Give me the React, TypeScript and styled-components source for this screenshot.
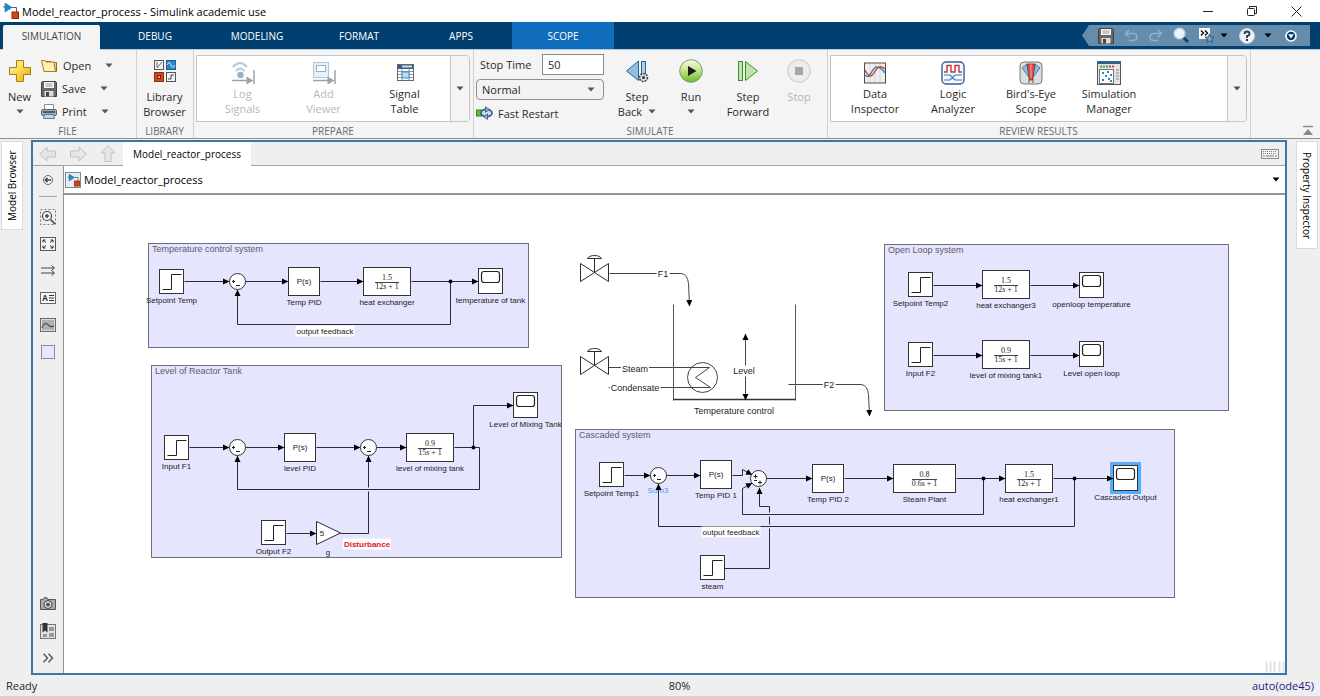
import React from "react";
import styled, { createGlobalStyle } from "styled-components";

const GlobalStyle = createGlobalStyle`
  * { box-sizing: border-box; }
  body { margin: 0; background: #efefef; }
  body, button, input, select {
    font-family: "Open Sans", "Noto Sans", sans-serif;
    font-size: 11px;
    color: #1f1f1f;
  }
  button, input, select { margin: 0; padding: 0; border: 0; background: none; }
  svg { display: block; flex: none; }
`;

/* ---------- frame ---------- */

const Page = styled.div`
  display: flex;
  flex-direction: column;
  min-height: 100vh;
`;

const TitleBar = styled.header`
  display: flex;
  align-items: center;
  height: 22px;
  padding-left: 3px;
  gap: 3px;
  background: #fff;
  color: #000;
`;

const WindowTitle = styled.h1`
  flex: 1;
  margin: 0;
  font-size: 11px;
  font-weight: 400;
`;

const WindowButton = styled.button`
  display: flex;
  align-items: center;
  justify-content: center;
  width: 44px;
  height: 22px;
`;

const WindowButtons = styled.div`
  display: flex;
  padding-right: 2px;
`;

const TabStrip = styled.nav`
  display: flex;
  justify-content: space-between;
  height: 28px;
  padding-left: 2px;
  background: #003f6f;
  border-bottom: 1px solid #b9c9d8;
`;

const TabList = styled.div`
  display: flex;
`;

const Tab = styled.button<{ $kind?: "active" | "context" }>`
  width: ${(p) => (p.$kind === "active" ? 97 : 102)}px;
  margin: ${(p) => (p.$kind === "active" ? "3px 4px 0 1px" : "0")};
  height: ${(p) => (p.$kind === "active" ? 25 : 27)}px;
  padding-bottom: ${(p) => (p.$kind === "active" ? 3 : 0)}px;
  border-radius: ${(p) => (p.$kind === "active" ? "2px 2px 0 0" : "0")};
  background: ${(p) =>
    p.$kind === "active" ? "#f4f4f4" : p.$kind === "context" ? "#106dbb" : "transparent"};
  color: ${(p) => (p.$kind === "active" ? "#454545" : "#fff")};
  font-size: 10px;
`;

const QuickBar = styled.div`
  display: flex;
  align-items: center;
  width: 228px;
  height: 21px;
  margin: 3px 10px 0 0;
  padding-left: 14px;
  background: #668cab;
  clip-path: polygon(0 50%, 7px 0, 100% 0, 100% 100%, 7px 100%);
`;

const QuickButton = styled.button<{ $w?: number }>`
  display: flex;
  align-items: center;
  justify-content: center;
  width: ${(p) => p.$w ?? 25}px;
  height: 21px;
`;

/* ---------- ribbon ---------- */

const Ribbon = styled.div`
  display: flex;
  height: 89px;
  background: #f4f4f4;
  border-bottom: 1px solid #8b9096;
`;

const Group = styled.section<{ $w: number }>`
  display: flex;
  flex-direction: column;
  width: ${(p) => p.$w}px;
  height: 88px;
  padding: 5px 3px 0 2px;
  border-right: 1px solid #cfcfcf;
`;

const GroupBody = styled.div`
  display: flex;
  height: 69px;
`;

const GroupTitle = styled.h2`
  margin: 0;
  font-size: 10px;
  line-height: 14px;
  font-weight: 400;
  text-align: center;
  color: #6a6a6a;
`;

const BigButton = styled.button<{ $w: number; $off?: boolean }>`
  display: flex;
  flex-direction: column;
  align-items: center;
  width: ${(p) => p.$w}px;
  padding-top: 4px;
  line-height: 15px;
  color: ${(p) => (p.$off ? "#b5b5b5" : "#2b2b2b")};
  svg { margin-bottom: 6px; }
`;

const Line = styled.span`
  display: flex;
  align-items: center;
  justify-content: center;
  gap: 6px;
  height: 15px;
  white-space: nowrap;
  svg { margin: 0; }
`;

const SmallList = styled.div`
  display: flex;
  flex-direction: column;
  margin-top: -1px;
  padding-left: 4px;
`;

const SmallButton = styled.button<{ $gap?: number }>`
  display: flex;
  align-items: center;
  gap: 5px;
  height: 23px;
  color: #2b2b2b;
  svg:last-child { margin-left: ${(p) => p.$gap ?? 0}px; }
`;

const Gallery = styled.div`
  display: flex;
  flex: 1;
  height: 67px;
  margin-bottom: 2px;
  background: #fff;
  border: 1px solid #c4c4c4;
  border-radius: 0 4px 4px 0;
`;

const GalleryItems = styled.div`
  display: flex;
  flex: 1;
  padding-left: 5px;
`;

const GalleryItem = styled.button<{ $w: number; $off?: boolean }>`
  display: flex;
  flex-direction: column;
  align-items: center;
  width: ${(p) => p.$w}px;
  padding-top: 5px;
  line-height: 15px;
  color: ${(p) => (p.$off ? "#b8b8b8" : "#2b2b2b")};
  svg { margin-bottom: 1px; }
`;

const GalleryMore = styled.button`
  display: flex;
  align-items: center;
  justify-content: center;
  width: 19px;
  background: #f4f4f4;
  border-left: 1px solid #c4c4c4;
  border-radius: 0 4px 4px 0;
`;

const SimSettings = styled.div`
  display: flex;
  flex-direction: column;
  width: 128px;
  margin-top: -1px;
`;

const StopRow = styled.label`
  display: flex;
  align-items: center;
  justify-content: space-between;
  padding-left: 4px;
  color: #2b2b2b;
`;

const StopInput = styled.input`
  width: 62px;
  height: 21px;
  padding-left: 5px;
  background: #fff;
  border: 1px solid #8a8a8a;
`;

const SelectWrap = styled.div`
  position: relative;
  margin: 4px 0 2px;
  svg { position: absolute; right: 9px; top: 8px; pointer-events: none; }
`;

const ModeSelect = styled.select`
  appearance: none;
  display: block;
  width: 100%;
  height: 21px;
  padding-left: 5px;
  background: #f2f2f2;
  border: 1px solid #8f8f8f;
  border-radius: 4px;
`;

const RibbonEnd = styled.div`
  display: flex;
  flex: 1;
  align-items: flex-end;
  justify-content: flex-end;
  padding: 0 6px 2px 0;
`;

/* ---------- workspace ---------- */

const Workspace = styled.div`
  display: flex;
  flex: 1;
`;

const SideRail = styled.aside<{ $right?: boolean }>`
  display: flex;
  align-items: flex-start;
  justify-content: ${(p) => (p.$right ? "flex-end" : "flex-start")};
  width: ${(p) => (p.$right ? 33 : 31)}px;
  padding: 2px 2px 0 1px;
`;

const SideTab = styled.button<{ $h: number; $up?: boolean }>`
  width: 22px;
  height: ${(p) => p.$h}px;
  background: #fff;
  border: 1px solid #dadada;
  color: #000;
  font-size: 10px;
  line-height: 20px;
  writing-mode: vertical-rl;
  transform: ${(p) => (p.$up ? "rotate(180deg)" : "none")};
`;

const Editor = styled.main`
  display: flex;
  flex: 1;
  flex-direction: column;
  min-width: 0;
  margin-top: 1px;
  border: 2px solid #3a76ab;
  background: #efefef;
`;

const NavRow = styled.div`
  display: flex;
  align-items: stretch;
  height: 24px;
  padding-right: 6px;
  border-bottom: 1px solid #a0a4a8;
`;

const NavButton = styled.button`
  display: flex;
  align-items: center;
  justify-content: center;
  width: 30px;
`;

const DocTab = styled.button`
  width: 128px;
  height: 24px;
  background: #fff;
  color: #000;
  font-size: 10px;
`;

const NavEnd = styled.div`
  display: flex;
  flex: 1;
  align-items: center;
  justify-content: flex-end;
`;

const EditorBody = styled.div`
  display: flex;
  flex: 1;
`;

const Palette = styled.div`
  display: flex;
  flex-direction: column;
  justify-content: space-between;
  width: 31px;
  padding-bottom: 2px;
  border-right: 1px solid #8f959b;
`;

const PaletteGroup = styled.div`
  display: flex;
  flex-direction: column;
  align-items: center;
`;

const PaletteRule = styled.hr`
  width: 18px;
  margin: 3px 0 6px;
  border: 0;
  border-top: 1px solid #a8a8a8;
`;

const PaletteButton = styled.button`
  display: flex;
  align-items: center;
  justify-content: center;
  width: 28px;
  height: 27px;
`;

const CanvasColumn = styled.div`
  display: flex;
  flex: 1;
  flex-direction: column;
  min-width: 0;
`;

const Breadcrumb = styled.div`
  display: flex;
  align-items: center;
  gap: 3px;
  height: 29px;
  padding: 0 5px 0 1px;
  background: #fff;
  border-bottom: 2px solid #8f959b;
`;

const Crumb = styled.button`
  color: #000;
`;

const CrumbMore = styled.button`
  margin-left: auto;
`;

const StatusBar = styled.footer`
  display: grid;
  grid-template-columns: 33% 37% 1fr;
  align-items: center;
  height: 22px;
  padding: 0 6px;
  border-bottom: 1px solid #b4e0e0;
`;

const ZoomLevel = styled.span`
  text-align: center;
`;

const Solver = styled.a`
  justify-self: end;
  color: #1a1a8c;
  text-decoration: none;
`;

/* ---------- diagram ---------- */

// Model coordinates of the canvas' top-left corner.
const SCROLL = { x: 64, y: 195 };

const Canvas = styled.div`
  position: relative;
  flex: 1;
  min-height: 440px;
  overflow: hidden;
  background: #fff;
  color: #1c1c1c;
  font-family: "Liberation Sans", Arial, sans-serif;
  font-size: 8px;
  line-height: 9px;
`;

const Placed = styled.div<{ $x: number; $y: number; $w?: number; $h?: number }>`
  position: absolute;
  left: ${(p) => p.$x - SCROLL.x}px;
  top: ${(p) => p.$y - SCROLL.y}px;
  ${(p) => (p.$w ? `width: ${p.$w}px;` : "")}
  ${(p) => (p.$h ? `height: ${p.$h}px;` : "")}
`;

const Area = styled(Placed)`
  padding: 0 3px;
  background: #e5e5fe;
  border: 1px solid #6f6f7c;
  color: #5c5c66;
  font-size: 9px;
  line-height: 11px;
`;

const Wires = styled.svg`
  position: absolute;
  inset: 0;
  width: 100%;
  height: 100%;
`;

const Block = styled(Placed)<{ $selected?: boolean }>`
  display: flex;
  align-items: center;
  justify-content: center;
  background: #fff;
  border: 1px solid #333;
  box-shadow: ${(p) => (p.$selected ? "0 0 0 3px #55aefa" : "none")};
`;

const BlockName = styled.span`
  position: absolute;
  top: 100%;
  left: 50%;
  margin-top: 3px;
  transform: translateX(-50%);
  white-space: nowrap;
`;

const Fraction = styled.span`
  display: flex;
  flex-direction: column;
  align-items: center;
  font-family: "Liberation Serif", "Times New Roman", serif;
  font-size: 8px;
  line-height: 9px;
  white-space: nowrap;
`;

const Denominator = styled.span`
  border-top: 1px solid #444;
  line-height: 8px;
`;

const SumCircle = styled(Placed)`
  background: #fff;
  border: 1px solid #333;
  border-radius: 50%;
`;

const FloatLabel = styled(Placed)<{ $tone?: string; $clear?: boolean; $size?: number }>`
  padding: 1px;
  transform: translate(-50%, -50%);
  background: ${(p) => (p.$clear ? "transparent" : "#fff")};
  color: ${(p) => p.$tone ?? "#1c1c1c"};
  font-weight: ${(p) => (p.$tone === "#e0161e" ? 700 : 400)};
  font-size: ${(p) => p.$size ?? 8}px;
  white-space: nowrap;
`;

const Caret = ({ dark }: { dark?: boolean }) => (
  <svg width="8" height="5" viewBox="0 0 8 5" aria-hidden="true">
    <path d="M.5 .5h7L4 4.5z" fill={dark ? "#000" : "#555"} />
  </svg>
);

type At = { x: number; y: number; name: string };

const StepBlock = ({ x, y, name }: At) => (
  <Block $x={x} $y={y} $w={25} $h={25}>
    <svg width="23" height="23" fill="none" stroke="#222">
      <path d="M2.5 19.5h9v-15h10" />
    </svg>
    <BlockName>{name}</BlockName>
  </Block>
);

const ScopeBlock = ({ x, y, name, selected }: At & { selected?: boolean }) => (
  <Block $x={x} $y={y} $w={25} $h={26} $selected={selected}>
    <svg width="23" height="24" fill="none" stroke="#222">
      <rect x="2.5" y="2.5" width="18" height="11" rx="2.5" strokeWidth="1.2" />
    </svg>
    <BlockName>{name}</BlockName>
  </Block>
);

const PidBlock = ({ x, y, name }: At) => (
  <Block $x={x} $y={y} $w={32} $h={29}>
    P(s)
    <BlockName>{name}</BlockName>
  </Block>
);

const TransferBlock = ({ x, y, name, w = 48, num, den }: At & { w?: number; num: string; den: string }) => (
  <Block $x={x} $y={y} $w={w} $h={29}>
    <Fraction>
      <span>{num}</span>
      <Denominator>
        {den}
        <i>s</i> + 1
      </Denominator>
    </Fraction>
    <BlockName>{name}</BlockName>
  </Block>
);

const Sum = ({ x, y, three }: { x: number; y: number; three?: boolean }) => (
  <SumCircle $x={x - 8} $y={y - 8} $w={17} $h={17}>
    <svg width="15" height="15" fill="none" stroke="#222">
      {three ? (
        <path d="M2.5 5.5h4M4.5 3.5v4M3 9.5h3M7 11.5h4M9 9.5v4" />
      ) : (
        <path d="M2 7.5h3M3.5 6v3M6 11.5h4" />
      )}
    </svg>
  </SumCircle>
);

const areas = [
  { x: 148, y: 243, w: 381, h: 105, name: "Temperature control system" },
  { x: 151, y: 365, w: 411, h: 193, name: "Level of Reactor Tank" },
  { x: 884, y: 244, w: 345, h: 167, name: "Open Loop system" },
  { x: 575, y: 429, w: 600, h: 169, name: "Cascaded system" },
];

const steps: At[] = [
  { x: 159, y: 269, name: "Setpoint Temp" },
  { x: 164, y: 435, name: "Input F1" },
  { x: 261, y: 520, name: "Output F2" },
  { x: 599, y: 462, name: "Setpoint Temp1" },
  { x: 700, y: 555, name: "steam" },
  { x: 908, y: 272, name: "Setpoint Temp2" },
  { x: 908, y: 342, name: "Input F2" },
];

const pids: At[] = [
  { x: 288, y: 267, name: "Temp PID" },
  { x: 284, y: 433, name: "level PID" },
  { x: 700, y: 460, name: "Temp PID 1" },
  { x: 812, y: 464, name: "Temp PID 2" },
];

const transfers = [
  { x: 363, y: 267, name: "heat exchanger", num: "1.5", den: "12" },
  { x: 406, y: 433, name: "level of mixing tank", num: "0.9", den: "15" },
  { x: 893, y: 464, w: 63, name: "Steam Plant", num: "0.8", den: "0.6" },
  { x: 1005, y: 464, name: "heat exchanger1", num: "1.5", den: "12" },
  { x: 982, y: 270, name: "heat exchanger3", num: "1.5", den: "12" },
  { x: 982, y: 340, name: "level of mixing tank1", num: "0.9", den: "15" },
];

const scopes = [
  { x: 478, y: 268, name: "temperature of tank" },
  { x: 513, y: 392, name: "Level of Mixing Tank" },
  { x: 1079, y: 272, name: "openloop temperature" },
  { x: 1079, y: 341, name: "Level open loop" },
  { x: 1113, y: 465, name: "Cascaded Output", selected: true },
];

const sums = [
  { x: 237, y: 281 },
  { x: 237, y: 447 },
  { x: 368, y: 447 },
  { x: 658, y: 475 },
  { x: 758, y: 478, three: true },
];

const signalWires = [
  "M184 281H228", "M245 281H287", "M320 281H362", "M411 281H477", "M450 281V324H237V290",
  "M189 447H228", "M245 447H283", "M316 447H359", "M376 447H405", "M473 447V405H512",
  "M454 447H479V489H237V456", "M286 533H315",
  "M624 475H649", "M666 475H699", "M732 475H742V469L751 474", "M766 478H811", "M844 478H892",
  "M956 478H1004", "M1053 478H1112", "M983 478V514H742V488L751 483", "M1074 478V526H658V484",
  "M933 285H981", "M1030 285H1078", "M933 355H981", "M1030 355H1078",
];

const Valve = ({ x, y }: { x: number; y: number }) => (
  <g transform={`translate(${x} ${y})`}>
    <path d="M-14 -9L14 9V-9L-14 9ZM0 0V-14M-7 -14C-5 -18 5 -18 7 -14Z" />
  </g>
);

const DiagramWires = () => (
  <Wires aria-hidden="true">
    <defs>
      <marker id="arrow" markerWidth="7" markerHeight="7" refX="5.5" refY="3.5" orient="auto-start-reverse" markerUnits="userSpaceOnUse">
        <path d="M0 .5L6.5 3.5L0 6.5z" fill="#000" />
      </marker>
    </defs>
    <g transform={`translate(${0.5 - SCROLL.x} ${0.5 - SCROLL.y})`} fill="none" stroke="#2b2b33">
      {signalWires.map((d) => (
        <path key={d} d={d} markerEnd="url(#arrow)" />
      ))}
      <path d="M340 533H368V491" />
      <path d="M368 487V456" markerEnd="url(#arrow)" />
      <path d="M724 568H769V528M769 524V516M769 512V506H759V500" />
      <path d="M759 502V488" markerEnd="url(#arrow)" />
      <g fill="#000" stroke="none">
        <circle cx="450" cy="281" r="2" />
        <circle cx="473" cy="447" r="2" />
        <circle cx="983" cy="478" r="2" />
        <circle cx="1074" cy="478" r="2" />
      </g>
      <path d="M316 521V544L340 532.500Z" fill="#fff" />
      <Valve x={594} y={272} />
      <Valve x={594} y={365} />
      <g stroke="#444">
        <path d="M609 273H658M608 367H709L695 377L710 387H608M788 384H834" />
        <path d="M673 304V400M795 304V400" stroke="#555" />
        <path d="M673 399H795" stroke="#333" strokeWidth="1.300" />
        <circle cx="702" cy="377" r="15" />
        <path d="M658 273H681Q687 274 688 283L689 305" markerEnd="url(#arrow)" />
        <path d="M834 384H861Q867 385 868 394L869 415" markerEnd="url(#arrow)" />
        <path d="M745 334V399" markerStart="url(#arrow)" markerEnd="url(#arrow)" />
      </g>
      <g stroke="#e2e2e2" strokeWidth="2">
        <path d="M1266 661V672M1270 661V672M1274 661V672M1279 661V672M1283 661V672" />
      </g>
    </g>
  </Wires>
);

const Diagram = () => (
  <Canvas>
    {areas.map((a) => (
      <Area key={a.name} $x={a.x} $y={a.y} $w={a.w} $h={a.h}>{a.name}</Area>
    ))}
    {sums.map((s) => <Sum key={`${s.x}-${s.y}`} {...s} />)}
    <FloatLabel $x={658} $y={490} $clear $tone="#3b9df5">Sum3</FloatLabel>
    {steps.map((s) => <StepBlock key={s.name} {...s} />)}
    {pids.map((s) => <PidBlock key={s.name} {...s} />)}
    {transfers.map((s) => <TransferBlock key={s.name} {...s} />)}
    {scopes.map((s) => <ScopeBlock key={s.name} {...s} />)}
    <DiagramWires />
    <FloatLabel $x={325} $y={331}>output feedback</FloatLabel>
    <FloatLabel $x={731} $y={532}>output feedback</FloatLabel>
    <FloatLabel $x={367} $y={544} $tone="#e0161e">Disturbance</FloatLabel>
    <FloatLabel $x={322} $y={533} $clear>5</FloatLabel>
    <FloatLabel $x={328} $y={552} $clear>g</FloatLabel>
    <FloatLabel $x={663} $y={274} $size={9}>F1</FloatLabel>
    <FloatLabel $x={829} $y={385} $size={9}>F2</FloatLabel>
    <FloatLabel $x={635} $y={369} $size={9}>Steam</FloatLabel>
    <FloatLabel $x={635} $y={388} $size={9}>Condensate</FloatLabel>
    <FloatLabel $x={744} $y={371} $size={9}>Level</FloatLabel>
    <FloatLabel $x={734} $y={411} $size={9}>Temperature control</FloatLabel>
  </Canvas>
);

/* ---------- icons ---------- */

const ModelIcon = ({ framed }: { framed?: boolean }) => (
  <svg width="16" height="16" viewBox="0 0 16 16" aria-hidden="true">
    {framed && <rect x=".5" y=".5" width="15" height="15" fill="#e9edf1" stroke="#7b8690" />}
    <g transform={framed ? "translate(2.500 2) scale(.78)" : undefined}>
      <path d="M0 4h3M9 4.500h4.500V9" fill="none" stroke="#50606e" />
      <path d="M2 0v9l7-4.500z" fill="#2387c7" stroke="#1b6ca5" strokeWidth=".6" />
      <rect x="9" y="9" width="6.500" height="6.500" fill="#d2431a" stroke="#8c2b10" />
    </g>
  </svg>
);

const NewIcon = () => (
  <svg width="24" height="24" viewBox="0 0 24 24" aria-hidden="true">
    <defs>
      <linearGradient id="gold" x1="0" y1="0" x2="1" y2="1">
        <stop offset="0" stopColor="#fff6c0" />
        <stop offset=".5" stopColor="#fbd84b" />
        <stop offset="1" stopColor="#e2a60c" />
      </linearGradient>
    </defs>
    <path d="M8.500 1.500h7v7h7v7h-7v7h-7v-7h-7v-7h7z" fill="url(#gold)" stroke="#a87e18" />
  </svg>
);

const FolderIcon = () => (
  <svg width="17" height="14" viewBox="0 0 17 14" aria-hidden="true">
    <path d="M4 2.500h6l1 1h4.500v9H4z" fill="#f0cf6a" stroke="#8c6d1f" />
    <path d="M.6 1.500h3.400l1 1.500h8v1.500l1.500 8H3z" fill="#fff0b0" stroke="#a07f2b" />
  </svg>
);

const DiskIcon = () => (
  <svg width="16" height="16" viewBox="0 0 16 16" aria-hidden="true">
    <path d="M1.500 .5h13l1 1v14h-15v-14z" fill="#686868" stroke="#404040" />
    <rect x="3" y="1" width="10" height="6" fill="#f7f7f7" />
    <path d="M4.500 3h7M4.500 5h7" stroke="#999" />
    <rect x="3.500" y="10" width="9" height="5.500" fill="#dcdcdc" />
    <rect x="5" y="11" width="3" height="4.500" fill="#444" />
  </svg>
);

const PrinterIcon = () => (
  <svg width="16" height="15" viewBox="0 0 16 15" aria-hidden="true">
    <path d="M3.500 6V.5h9V6" fill="#fff" stroke="#8592a0" />
    <rect x=".5" y="5.500" width="15" height="6" rx="1.500" fill="#a4afba" stroke="#5a6570" />
    <path d="M2 8h12" stroke="#343c44" strokeWidth="1.500" />
    <path d="M3.500 10.500h9l1 4h-11z" fill="#b8dcf3" stroke="#60788c" />
  </svg>
);

const LibraryIcon = () => (
  <svg width="24" height="24" viewBox="0 0 24 24" aria-hidden="true">
    <g stroke="#555">
      <rect x="1.500" y="1.500" width="9" height="9" fill="#f2f2f2" />
      <rect x="13.500" y="1.500" width="9" height="9" fill="#2a86c8" stroke="#1c5f93" />
      <rect x="1.500" y="13.500" width="9" height="9" fill="#d34a1d" stroke="#8c2f12" />
      <rect x="13.500" y="13.500" width="9" height="9" fill="#f2f2f2" />
    </g>
    <g fill="none">
      <path d="M4 3v5M4 9l5-6" stroke="#666" />
      <path d="M14 6q2.500-5 4 0t4 0" stroke="#d6efff" />
      <rect x="4.500" y="16.500" width="3" height="3" stroke="#7a200a" fill="#f0a080" />
      <path d="M15 20h3v-4h3" stroke="#444" />
    </g>
  </svg>
);

const LogIcon = () => (
  <svg width="24" height="24" viewBox="0 0 24 24" fill="none" aria-hidden="true">
    <path d="M2 6q7-8 14 0M5 10q4-5 8.500 0" stroke="#a9cbe3" strokeWidth="2" />
    <circle cx="9.500" cy="14" r="3.200" fill="#8fb5d3" />
    <path d="M1 19.500h15M23 9v14" stroke="#a2a2a2" strokeWidth="1.500" />
    <path d="M15.500 15.500v8l7-4z" fill="#a2a2a2" />
  </svg>
);

const ViewerIcon = () => (
  <svg width="24" height="24" viewBox="0 0 24 24" fill="none" aria-hidden="true">
    <rect x="1.500" y="1.500" width="15" height="15" fill="#e6f1fa" stroke="#a9c6dd" />
    <rect x="4.500" y="4.500" width="9" height="6" fill="#fff" stroke="#8db4d1" />
    <path d="M1 19.500h15M23 9v14" stroke="#a2a2a2" strokeWidth="1.500" />
    <path d="M15.500 15.500v8l7-4z" fill="#a2a2a2" />
  </svg>
);

const TableIcon = () => (
  <svg width="24" height="24" viewBox="0 0 24 24" fill="none" aria-hidden="true">
    <rect x="4.500" y="3.500" width="16" height="16" fill="#fff" stroke="#666" />
    <rect x="5" y="4" width="15" height="4" fill="#315f8d" />
    <rect x="9" y="4.500" width="10" height="2" fill="#d2dce6" />
    <path d="M5 10.500h15M5 13.500h15M5 16.500h15M9 8v11M16 8v11" stroke="#999" />
    <rect x="9" y="11" width="7" height="6" fill="#b9dcf7" stroke="#3b8ad0" />
  </svg>
);

const RestartIcon = () => (
  <svg width="17" height="14" viewBox="0 0 17 14" fill="none" aria-hidden="true">
    <rect x=".5" y="4" width="5" height="6" fill="#66b844" stroke="#3b7a26" />
    <ellipse cx="10.500" cy="7" rx="5.500" ry="3.600" fill="#c6deee" stroke="#2e5877" strokeWidth="1.600" />
    <path d="M9.500 .8v5.400L13.500 3.500zM11.500 8v5.400L7.500 10.600z" fill="#8bb9d9" stroke="#2e5877" strokeWidth=".8" />
  </svg>
);

const StepBackIcon = () => (
  <svg width="24" height="24" viewBox="0 0 24 24" aria-hidden="true">
    <path d="M13.500 2v19.500L1.500 12z" fill="#8fc0e2" stroke="#2f6690" />
    <rect x="16.500" y="2.500" width="4" height="19" fill="#a9d2ee" stroke="#2f6690" />
    <circle cx="18.500" cy="18.500" r="4" fill="#ddd" stroke="#444" strokeWidth="1.500" strokeDasharray="2 1" />
    <circle cx="18.500" cy="18.500" r="1.500" fill="#333" />
  </svg>
);

const RunIcon = () => (
  <svg width="24" height="24" viewBox="0 0 24 24" aria-hidden="true">
    <defs>
      <linearGradient id="go" x1="0" y1="0" x2="0" y2="1">
        <stop offset="0" stopColor="#f4fbe8" />
        <stop offset=".5" stopColor="#bfe384" />
        <stop offset="1" stopColor="#69b52b" />
      </linearGradient>
    </defs>
    <circle cx="12" cy="12" r="11.300" fill="url(#go)" stroke="#7a9e58" />
    <path d="M9 7v10l8.500-5z" fill="#1d1d1d" />
  </svg>
);

const StepForwardIcon = () => (
  <svg width="24" height="24" viewBox="0 0 24 24" fill="#bfe6a9" stroke="#3f8a33" aria-hidden="true">
    <rect x="2.500" y="2.500" width="4" height="19" />
    <path d="M9.500 2.500v19L21.500 12z" />
  </svg>
);

const StopIcon = () => (
  <svg width="24" height="24" viewBox="0 0 24 24" aria-hidden="true">
    <circle cx="12" cy="12" r="11.300" fill="#ececec" stroke="#c6c6c6" />
    <rect x="8" y="8" width="8" height="8" fill="#a6a6a6" />
  </svg>
);

const InspectorIcon = () => (
  <svg width="24" height="24" viewBox="0 0 24 24" fill="none" aria-hidden="true">
    <rect x="1.500" y="2" width="21" height="20" fill="#f0f0f0" stroke="#4c4c4c" />
    <path d="M7 3v18M12 3v18M17 3v18" stroke="#d4d4d4" />
    <path d="M2 14C8 20 8 6 14 6q4 0 8 6" stroke="#3b86c6" strokeWidth="1.500" />
    <path d="M2 9q5 10 9 3c4-7 7-8 11-4" stroke="#cf4436" strokeWidth="1.500" />
  </svg>
);

const LogicIcon = () => (
  <svg width="24" height="24" viewBox="0 0 24 24" fill="none" aria-hidden="true">
    <rect x="1" y="1" width="22" height="22" rx="4" fill="#f6f9fd" stroke="#33609a" strokeWidth="1.400" />
    <path d="M3 11h3V4.500h4V11h4V4.500h4V11h3" stroke="#c03a35" strokeWidth="1.400" />
    <path d="M3 14h6l5 5h7M3 19h6l5-5h7" stroke="#2f7cc0" strokeWidth="1.200" />
  </svg>
);

const BirdIcon = () => (
  <svg width="24" height="24" viewBox="0 0 24 24" aria-hidden="true">
    <rect x="1" y="1" width="22" height="22" rx="4" fill="#dedede" stroke="#777" />
    <path d="M3 7l5-4 4 16z" fill="#7cc0ea" stroke="#2d6fa0" strokeWidth=".8" />
    <path d="M21 7l-5-4-4 16z" fill="#7cc0ea" stroke="#2d6fa0" strokeWidth=".8" />
    <path d="M8 3h8l-2.500 16h-3z" fill="#dc5144" stroke="#93261c" strokeWidth=".8" />
    <path d="M12 3v14" stroke="#f3a59c" />
    <path d="M10 18v4M14 18v4" stroke="#555" />
  </svg>
);

const ManagerIcon = () => (
  <svg width="24" height="24" viewBox="0 0 24 24" fill="none" aria-hidden="true">
    <rect x=".5" y=".5" width="23" height="23" fill="#e4e4e4" stroke="#555" />
    <rect x="0" y="0" width="24" height="3" fill="#2f6189" />
    <path d="M3 5.500h9" stroke="#2fae4d" strokeWidth="2" strokeDasharray="2 1" />
    <path d="M12 5.500h5" stroke="#e0473a" strokeWidth="2" strokeDasharray="2 1" />
    <rect x="2.500" y="8.500" width="14" height="14" fill="#fff" stroke="#777" />
    <path d="M5 12h2M10 11h2M13 14h2M8 15h2M5 19h2M11 18h2M13 20h2" stroke="#2682cc" strokeWidth="2" />
    <path d="M19 9h3M19 12h3M19 15h3M19 18h3" stroke="#888" />
  </svg>
);

const UndoIcon = ({ flip }: { flip?: boolean }) => (
  <svg width="14" height="13" viewBox="0 0 14 13" fill="none" aria-hidden="true">
    <g transform={flip ? "matrix(-1 0 0 1 14 0)" : undefined}>
      <path d="M5 1L1.500 4.500L5 8M2 4.500h7q4 0 4 3.500t-4 3.500H5" stroke="#8fb0cb" strokeWidth="1.600" />
    </g>
  </svg>
);

const SearchIcon = () => (
  <svg width="17" height="17" viewBox="0 0 17 17" aria-hidden="true">
    <path d="M10 10l5 5" stroke="#173f6b" strokeWidth="3" />
    <circle cx="6.500" cy="6.500" r="5.300" fill="#eaf6ff" stroke="#c3d3df" strokeWidth="1.500" />
  </svg>
);

const FavoriteIcon = () => (
  <svg width="16" height="16" viewBox="0 0 16 16" fill="none" aria-hidden="true">
    <rect x="1" y="0" width="11" height="11" fill="#f7f7f7" />
    <path d="M3 2.500l2.500 2.500L3 7.500M7 2.500L9.500 5L7 7.500" stroke="#111" strokeWidth="1.400" />
    <path d="M11.500 6l1.400 3 3.100.3-2.300 2.100.7 3.100-2.900-1.700-2.700 1.700.7-3.100L7 9.300l3.100-.3z" fill="#7fa3c5" stroke="#23496f" strokeWidth=".8" />
  </svg>
);

const HelpIcon = () => (
  <svg width="16" height="16" viewBox="0 0 16 16" fill="none" aria-hidden="true">
    <circle cx="8" cy="8" r="7.500" fill="#eef2f5" stroke="#c5d0d9" />
    <path d="M5.500 6q0-2.500 2.500-2.500T10.500 6Q10.500 7.500 8 8v2" stroke="#1e3c5a" strokeWidth="1.800" />
    <rect x="7" y="11" width="2" height="2" fill="#1e3c5a" />
  </svg>
);

const MinimizeQuickIcon = () => (
  <svg width="12" height="12" viewBox="0 0 12 12" fill="none" aria-hidden="true">
    <circle cx="6" cy="6" r="5" fill="#003f6f" stroke="#fff" strokeWidth="1.600" />
    <path d="M3.200 4.200h5.600L6 8.600z" fill="#fff" />
  </svg>
);

const ArrowIcon = ({ turn }: { turn: number }) => (
  <svg width="20" height="18" viewBox="0 0 20 18" aria-hidden="true">
    <path transform={`rotate(${turn} 10 9)`} d="M1.500 9L9 2v4h8.500v6H9v4z" fill="#e6e6e6" stroke="#c0c0c0" />
  </svg>
);

const KeyboardIcon = () => (
  <svg width="18" height="10" viewBox="0 0 18 10" fill="none" aria-hidden="true">
    <rect x=".5" y=".5" width="17" height="9" fill="#f6f6f6" stroke="#8a8a8a" />
    <path d="M2 2.500h14M2 4.500h14" stroke="#777" strokeDasharray="1 1" />
    <path d="M2 7h2M5 7h8M14 7h2" stroke="#777" />
  </svg>
);

const CollapseIcon = () => (
  <svg width="12" height="11" viewBox="0 0 12 11" aria-hidden="true">
    <path d="M1 1.500h10" stroke="#888" strokeWidth="1.500" />
    <path d="M6 4l5 6H1z" fill="#888" />
  </svg>
);

const HideIcon = () => (
  <svg width="12" height="12" viewBox="0 0 12 12" fill="none" stroke="#444" aria-hidden="true">
    <circle cx="6" cy="6" r="4.500" fill="#f8f8f8" stroke="#666" />
    <path d="M9 6H4M5.500 3.800L3.300 6L5.500 8.200" strokeWidth="1.500" />
  </svg>
);

const ZoomIcon = () => (
  <svg width="16" height="16" viewBox="0 0 16 16" fill="none" stroke="#444" aria-hidden="true">
    <rect x=".5" y=".5" width="15" height="15" stroke="#777" strokeDasharray="2 2" />
    <circle cx="7" cy="7" r="4.500" fill="#f4f4f4" strokeWidth="1.200" />
    <path d="M7 5v4M5 7h4M10.500 10.500L15 15" strokeWidth="1.500" />
  </svg>
);

const FitIcon = () => (
  <svg width="16" height="14" viewBox="0 0 16 14" fill="none" aria-hidden="true">
    <rect x=".5" y=".5" width="15" height="13" fill="#f6f6f6" stroke="#555" />
    <path d="M3 5.500V3h2.500M10.500 3H13v2.500M13 8.500V11h-2.500M5.500 11H3V8.500M3 3l3 2.500M13 3l-3 2.500M3 11l3-2.500M13 11l-3-2.500" stroke="#333" />
  </svg>
);

const LinesIcon = () => (
  <svg width="15" height="11" viewBox="0 0 15 11" fill="none" stroke="#444" aria-hidden="true">
    <path d="M0 3h13M0 8h13M10.500 .5L13.500 3L10.500 5.500M10.500 5.500L13.500 8L10.500 10.500" />
  </svg>
);

const TextIconBox = styled.span`
  display: flex;
  align-items: center;
  gap: 1px;
  height: 12px;
  padding: 0 1px;
  border: 1px solid #666;
  background: #f8f8f8;
  color: #333;
  font-size: 8px;
  font-weight: 700;
  line-height: 10px;
`;

const AnnotationIcon = () => (
  <TextIconBox>
    A
    <svg width="5" height="8" stroke="#333">
      <path d="M0 1.500h5M0 4h5M0 6.500h5" />
    </svg>
  </TextIconBox>
);

const ImageIcon = () => (
  <svg width="16" height="14" viewBox="0 0 16 14" fill="none" aria-hidden="true">
    <rect x=".5" y=".5" width="15" height="13" fill="#dcdcdc" stroke="#6a6a6a" />
    <rect x="2" y="2" width="12" height="10" fill="#b0b0b0" />
    <path d="M2 10q2-6 5-4t3 2.500T14 8" stroke="#555" strokeWidth="1.300" />
  </svg>
);

const AreaIcon = () => (
  <svg width="14" height="14" aria-hidden="true">
    <rect x=".5" y=".5" width="13" height="13" fill="#e7e7fb" stroke="#8a8a96" />
  </svg>
);

const CameraIcon = () => (
  <svg width="16" height="13" viewBox="0 0 16 13" aria-hidden="true">
    <path d="M.5 2.500H3L4 .8h3l.8 1.700h7.700v10H.5z" fill="#aaa" stroke="#555" />
    <circle cx="8" cy="7.500" r="4" fill="#ddd" stroke="#444" />
    <circle cx="8" cy="7.500" r="2" fill="#555" />
  </svg>
);

const BookmarkIcon = () => (
  <svg width="16" height="16" viewBox="0 0 16 16" aria-hidden="true">
    <rect x=".5" y="1.500" width="15" height="14" fill="#e2e2e2" stroke="#777" />
    <path d="M9 4h5v4H9zM9 10h5v4H9zM3 11h4v3H3z" fill="#999" />
    <path d="M2.500 0h5v9.500L5 7.500l-2.500 2z" fill="#333" />
  </svg>
);

const MoreIcon = () => (
  <svg width="12" height="10" viewBox="0 0 12 10" fill="none" stroke="#555" strokeWidth="1.400" aria-hidden="true">
    <path d="M1.500 .8L5.500 5L1.500 9.200M6.500 .8L10.500 5L6.500 9.200" />
  </svg>
);

/* ---------- page ---------- */

const signalItems = [
  { lines: ["Log", "Signals"], icon: <LogIcon />, off: true },
  { lines: ["Add", "Viewer"], icon: <ViewerIcon />, off: true },
  { lines: ["Signal", "Table"], icon: <TableIcon />, off: false },
];

const reviewItems = [
  { lines: ["Data", "Inspector"], icon: <InspectorIcon /> },
  { lines: ["Logic", "Analyzer"], icon: <LogicIcon /> },
  { lines: ["Bird's-Eye", "Scope"], icon: <BirdIcon /> },
  { lines: ["Simulation", "Manager"], icon: <ManagerIcon /> },
];

const paletteTools = [
  { name: "Zoom", icon: <ZoomIcon /> },
  { name: "Fit to view", icon: <FitIcon /> },
  { name: "Sample time", icon: <LinesIcon /> },
  { name: "Annotation", icon: <AnnotationIcon /> },
  { name: "Image", icon: <ImageIcon /> },
  { name: "Area", icon: <AreaIcon /> },
];

export default function App() {
  return (
    <Page>
      <GlobalStyle />
      <TitleBar>
        <ModelIcon />
        <WindowTitle>Model_reactor_process - Simulink academic use</WindowTitle>
        <WindowButtons>
          <WindowButton aria-label="Minimize">
            <svg width="10" height="10" stroke="#222"><path d="M0 5.500h10" /></svg>
          </WindowButton>
          <WindowButton aria-label="Restore">
            <svg width="10" height="10" fill="none" stroke="#222">
              <rect x=".5" y="2.500" width="7" height="7" rx="1" />
              <path d="M2.500 2V.5h7v7H8" />
            </svg>
          </WindowButton>
          <WindowButton aria-label="Close">
            <svg width="11" height="11" stroke="#222"><path d="M.5 .5l10 10M10.500 .5l-10 10" /></svg>
          </WindowButton>
        </WindowButtons>
      </TitleBar>

      <TabStrip>
        <TabList>
          <Tab $kind="active">SIMULATION</Tab>
          <Tab>DEBUG</Tab>
          <Tab>MODELING</Tab>
          <Tab>FORMAT</Tab>
          <Tab>APPS</Tab>
          <Tab $kind="context">SCOPE</Tab>
        </TabList>
        <QuickBar>
          <QuickButton $w={20} aria-label="Save"><DiskIcon /></QuickButton>
          <QuickButton $w={30} aria-label="Undo"><UndoIcon /></QuickButton>
          <QuickButton $w={20} aria-label="Redo"><UndoIcon flip /></QuickButton>
          <QuickButton $w={30} aria-label="Search"><SearchIcon /></QuickButton>
          <QuickButton $w={20} aria-label="Favorites"><FavoriteIcon /></QuickButton>
          <QuickButton $w={15} aria-label="More favorites"><Caret dark /></QuickButton>
          <QuickButton $w={32} aria-label="Help"><HelpIcon /></QuickButton>
          <QuickButton $w={10} aria-label="More help"><Caret dark /></QuickButton>
          <QuickButton $w={36} aria-label="Toolbar options"><MinimizeQuickIcon /></QuickButton>
        </QuickBar>
      </TabStrip>

      <Ribbon>
        <Group $w={137}>
          <GroupBody>
            <BigButton $w={35}>
              <NewIcon />
              <Line>New</Line>
              <Line><Caret /></Line>
            </BigButton>
            <SmallList>
              <SmallButton $gap={9}><FolderIcon />Open<Caret /></SmallButton>
              <SmallButton $gap={9}><DiskIcon />Save<Caret /></SmallButton>
              <SmallButton $gap={9}><PrinterIcon />Print<Caret /></SmallButton>
            </SmallList>
          </GroupBody>
          <GroupTitle>FILE</GroupTitle>
        </Group>
        <Group $w={57}>
          <GroupBody>
            <BigButton $w={52}>
              <LibraryIcon />
              <Line>Library</Line>
              <Line>Browser</Line>
            </BigButton>
          </GroupBody>
          <GroupTitle>LIBRARY</GroupTitle>
        </Group>
        <Group $w={280}>
          <GroupBody>
            <Gallery>
              <GalleryItems>
                {signalItems.map((it) => (
                  <GalleryItem key={it.lines[0]} $w={81} $off={it.off} disabled={it.off}>
                    {it.icon}
                    {it.lines.map((l) => <Line key={l}>{l}</Line>)}
                  </GalleryItem>
                ))}
              </GalleryItems>
              <GalleryMore aria-label="More prepare tools"><Caret /></GalleryMore>
            </Gallery>
          </GroupBody>
          <GroupTitle>PREPARE</GroupTitle>
        </Group>
        <Group $w={354}>
          <GroupBody>
            <SimSettings>
              <StopRow>
                Stop Time
                <StopInput defaultValue="50" />
              </StopRow>
              <SelectWrap>
                <ModeSelect aria-label="Simulation mode" defaultValue="Normal">
                  <option>Normal</option>
                  <option>Accelerator</option>
                </ModeSelect>
                <Caret />
              </SelectWrap>
              <SmallButton><RestartIcon />Fast Restart</SmallButton>
            </SimSettings>
            <BigButton $w={66}>
              <StepBackIcon />
              <Line>Step</Line>
              <Line>Back <Caret /></Line>
            </BigButton>
            <BigButton $w={42}>
              <RunIcon />
              <Line>Run</Line>
              <Line><Caret /></Line>
            </BigButton>
            <BigButton $w={72}>
              <StepForwardIcon />
              <Line>Step</Line>
              <Line>Forward</Line>
            </BigButton>
            <BigButton $w={30} $off disabled>
              <StopIcon />
              <Line>Stop</Line>
            </BigButton>
          </GroupBody>
          <GroupTitle>SIMULATE</GroupTitle>
        </Group>
        <Group $w={423}>
          <GroupBody>
            <Gallery>
              <GalleryItems>
                {reviewItems.map((it) => (
                  <GalleryItem key={it.lines[0]} $w={78}>
                    {it.icon}
                    {it.lines.map((l) => <Line key={l}>{l}</Line>)}
                  </GalleryItem>
                ))}
              </GalleryItems>
              <GalleryMore aria-label="More review tools"><Caret /></GalleryMore>
            </Gallery>
          </GroupBody>
          <GroupTitle>REVIEW RESULTS</GroupTitle>
        </Group>
        <RibbonEnd>
          <button aria-label="Collapse toolstrip"><CollapseIcon /></button>
        </RibbonEnd>
      </Ribbon>

      <Workspace>
        <SideRail>
          <SideTab $h={89} $up>Model Browser</SideTab>
        </SideRail>
        <Editor>
          <NavRow>
            <NavButton aria-label="Back"><ArrowIcon turn={0} /></NavButton>
            <NavButton aria-label="Forward"><ArrowIcon turn={180} /></NavButton>
            <NavButton aria-label="Up"><ArrowIcon turn={90} /></NavButton>
            <DocTab>Model_reactor_process</DocTab>
            <NavEnd><button aria-label="Keyboard shortcuts"><KeyboardIcon /></button></NavEnd>
          </NavRow>
          <EditorBody>
            <Palette>
              <PaletteGroup>
                <PaletteButton aria-label="Hide browser"><HideIcon /></PaletteButton>
                <PaletteRule />
                {paletteTools.map((t) => (
                  <PaletteButton key={t.name} aria-label={t.name}>{t.icon}</PaletteButton>
                ))}
              </PaletteGroup>
              <PaletteGroup>
                <PaletteButton aria-label="Screenshot"><CameraIcon /></PaletteButton>
                <PaletteButton aria-label="Bookmarks"><BookmarkIcon /></PaletteButton>
                <PaletteButton aria-label="More tools"><MoreIcon /></PaletteButton>
              </PaletteGroup>
            </Palette>
            <CanvasColumn>
              <Breadcrumb>
                <ModelIcon framed />
                <Crumb>Model_reactor_process</Crumb>
                <CrumbMore aria-label="Show path"><Caret dark /></CrumbMore>
              </Breadcrumb>
              <Diagram />
            </CanvasColumn>
          </EditorBody>
        </Editor>
        <SideRail $right>
          <SideTab $h={108}>Property Inspector</SideTab>
        </SideRail>
      </Workspace>

      <StatusBar>
        <span>Ready</span>
        <ZoomLevel>80%</ZoomLevel>
        <Solver href="#solver">auto(ode45)</Solver>
      </StatusBar>
    </Page>
  );
}
